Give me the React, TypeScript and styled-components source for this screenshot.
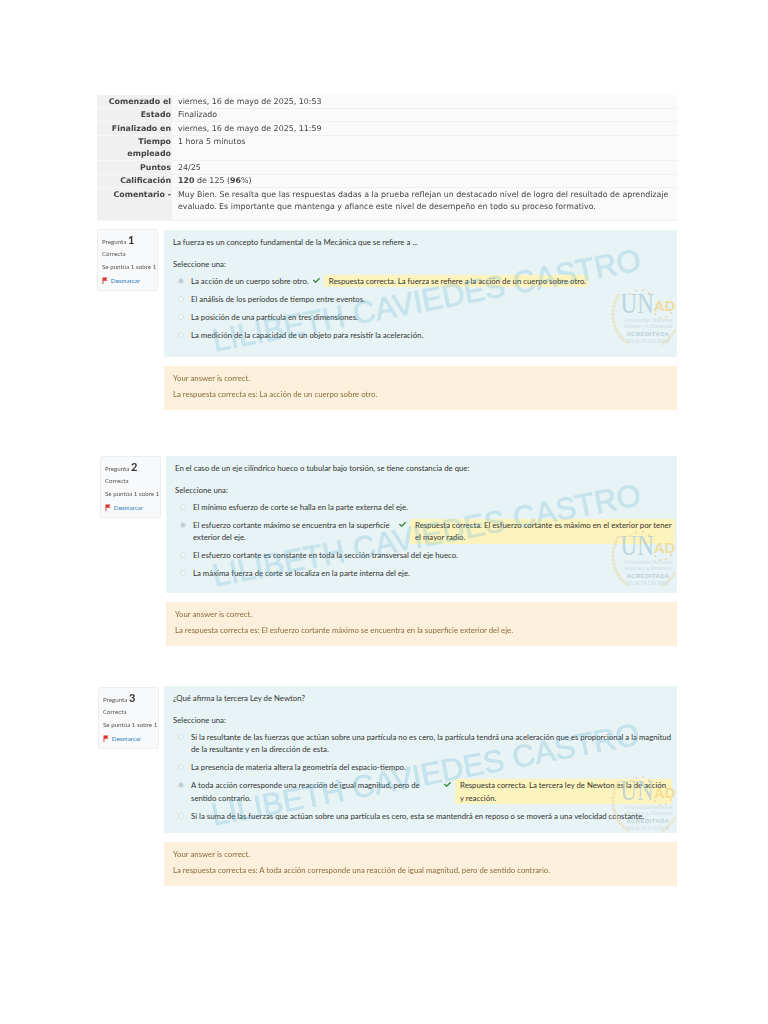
import React from 'react';
import styled, { createGlobalStyle } from 'styled-components';
import { FaCheck } from 'react-icons/fa';

const GlobalStyle = createGlobalStyle`
  html, body {
    margin: 0;
    padding: 0;
    background: #fff;
  }
  body {
    font-family: Lato, "Liberation Sans", sans-serif;
    color: #373a3c;
    height: 1024px;
    overflow: hidden;
  }
`;

type Option = {
  text: string;
  selected?: boolean;
  textWidth?: number;
  feedback?: string;
  feedbackWidth?: number;
  checkGap?: number;
};

type QuestionData = {
  num: number;
  prompt: string;
  indent: number;
  infoTop: number;
  gap: number;
  top: number;
  bottom: number;
  mark: { top: number; left: number };
  logoTop: number;
  options: Option[];
  answer: string;
};

const summary = [
  ['Comenzado el', 'viernes, 16 de mayo de 2025, 10:53'],
  ['Estado', 'Finalizado'],
  ['Finalizado en', 'viernes, 16 de mayo de 2025, 11:59'],
  ['Tiempo empleado', '1 hora 5 minutos'],
  ['Puntos', '24/25'],
];

const questions: QuestionData[] = [
  {
    num: 1,
    prompt: 'La fuerza es un concepto fundamental de la Mecánica que se refiere a ...',
    indent: 0,
    infoTop: -1,
    gap: 6,
    top: 9,
    bottom: 15.5,
    mark: { top: 53, left: 45 },
    logoTop: 58,
    options: [
      {
        text: 'La acción de un cuerpo sobre otro.',
        selected: true,
        feedback: 'Respuesta correcta. La fuerza se refiere a la acción de un cuerpo sobre otro.',
        checkGap: 4,
      },
      { text: 'El análisis de los períodos de tiempo entre eventos.' },
      { text: 'La posición de una partícula en tres dimensiones.' },
      { text: 'La medición de la capacidad de un objeto para resistir la aceleración.' },
    ],
    answer: 'La acción de un cuerpo sobre otro.',
  },
  {
    num: 2,
    prompt: 'En el caso de un eje cilíndrico hueco o tubular bajo torsión, se tiene constancia de que:',
    indent: 3,
    infoTop: 0,
    gap: 5,
    top: 46,
    bottom: 13,
    mark: { top: 62, left: 43 },
    logoTop: 74,
    options: [
      { text: 'El mínimo esfuerzo de corte se halla en la parte externa del eje.' },
      {
        text: 'El esfuerzo cortante máximo se encuentra en la superficie exterior del eje.',
        selected: true,
        textWidth: 202,
        feedback: 'Respuesta correcta. El esfuerzo cortante es máximo en el exterior por tener el mayor radio.',
        feedbackWidth: 265,
        checkGap: 4,
      },
      { text: 'El esfuerzo cortante es constante en toda la sección transversal del eje hueco.' },
      { text: 'La máxima fuerza de corte se localiza en la parte interna del eje.' },
    ],
    answer: 'El esfuerzo cortante máximo se encuentra en la superficie exterior del eje.',
  },
  {
    num: 3,
    prompt: '¿Qué afirma la tercera Ley de Newton?',
    indent: 1,
    infoTop: 1,
    gap: 5,
    top: 40,
    bottom: 11,
    mark: { top: 71, left: 44 },
    logoTop: 89,
    options: [
      {
        text: 'Si la resultante de las fuerzas que actúan sobre una partícula no es cero, la partícula tendrá una aceleración que es proporcional a la magnitud de la resultante y en la dirección de esta.',
      },
      { text: 'La presencia de materia altera la geometría del espacio-tiempo.' },
      {
        text: 'A toda acción corresponde una reacción de igual magnitud, pero de sentido contrario.',
        selected: true,
        textWidth: 232,
        feedback: 'Respuesta correcta. La tercera ley de Newton es la de acción y reacción.',
        feedbackWidth: 217,
        checkGap: 21,
      },
      { text: 'Si la suma de las fuerzas que actúan sobre una partícula es cero, esta se mantendrá en reposo o se moverá a una velocidad constante.' },
    ],
    answer: 'A toda acción corresponde una reacción de igual magnitud, pero de sentido contrario.',
  },
];

const Laurel = () => (
  <LaurelSvg viewBox="0 0 66 60">
    <path d="M8 6C-2 22 0 44 18 56" fill="none" stroke="#e8dfb4" strokeWidth="3" strokeDasharray="3 1" />
    <path d="M64 42C60 49 56 53 50 57" fill="none" stroke="#e8dfb4" strokeWidth="2.5" strokeDasharray="3 1" />
    <g fill="#ecc98e">
      <circle cx="19" cy="6" r="1" />
      <circle cx="25" cy="2.5" r="1" />
      <circle cx="32" cy="2" r="1" />
      <circle cx="38" cy="5" r="1" />
      <circle cx="44" cy="26" r="1" />
      <circle cx="49" cy="30" r="1" />
      <circle cx="55" cy="29" r="1" />
      <circle cx="60" cy="25" r="1" />
    </g>
  </LaurelSvg>
);

const Question = ({ q }: { q: QuestionData }) => (
  <QuestionRow $indent={q.indent} $top={q.top} $gap={q.gap}>
    <Info $top={q.infoTop}>
      <InfoTitle>
        Pregunta <b>{q.num}</b>
      </InfoTitle>
      <InfoLine>Correcta</InfoLine>
      <InfoLine>Se puntúa 1 sobre 1</InfoLine>
      <FlagLine>
        <svg width="6" height="7" viewBox="0 0 6 7">
          <path d="M0.5 0.5H5.5L4.2 2.2L5.5 3.8H1.4V7H0.5Z" fill="#d9322c" />
        </svg>
        Desmarcar
      </FlagLine>
    </Info>
    <Main>
      <Card $bottom={q.bottom}>
        <div>{q.prompt}</div>
        <Select>Seleccione una:</Select>
        <OptionList>
          {q.options.map((o) => (
            <OptionRow key={o.text}>
              <Radio $selected={o.selected} />
              <OptionText $width={o.textWidth}>{o.text}</OptionText>
              {o.feedback && (
                <>
                  <Check $gap={o.checkGap ?? 3}>
                    <FaCheck size={7} />
                  </Check>
                  <Feedback $width={o.feedbackWidth}>{o.feedback}</Feedback>
                </>
              )}
            </OptionRow>
          ))}
        </OptionList>
        <Logo $top={q.logoTop}>
          <Laurel />
          <LogoName>
            <b>UN</b>
            <span>AD</span>
          </LogoName>
          <LogoSmall>Universidad Nacional</LogoSmall>
          <LogoSmall>Abierta y a Distancia</LogoSmall>
          <LogoAccredited>ACREDITADA</LogoAccredited>
          <LogoQuality>EN ALTA CALIDAD</LogoQuality>
        </Logo>
        <Watermark $top={q.mark.top} $left={q.mark.left}>
          LILIBETH CAVIEDES CASTRO
        </Watermark>
      </Card>
      <Outcome>
        <p>Your answer is correct.</p>
        <p>La respuesta correcta es: {q.answer}</p>
      </Outcome>
    </Main>
  </QuestionRow>
);

export default function App() {
  return (
    <Page>
      <GlobalStyle />
      <Summary>
        <tbody>
          {summary.map(([label, value]) => (
            <tr key={label}>
              <th>{label}</th>
              <td>{value}</td>
            </tr>
          ))}
          <tr>
            <th>Calificación</th>
            <td>
              <b>120</b> de 125 (<b>96</b>%)
            </td>
          </tr>
          <tr>
            <th>Comentario -</th>
            <CommentCell>
              Muy Bien. Se resalta que las respuestas dadas a la prueba reflejan un destacado nivel de logro del
              resultado de aprendizaje evaluado. Es importante que mantenga y afiance este nivel de desempeño en todo
              su proceso formativo.
            </CommentCell>
          </tr>
        </tbody>
      </Summary>
      {questions.map((q) => (
        <Question key={q.num} q={q} />
      ))}
    </Page>
  );
}

const Page = styled.main`
  width: 580px;
  margin-left: 97px;
  padding-top: 95px;
  filter: blur(0.45px);
`;

const Summary = styled.table`
  width: 100%;
  border-collapse: collapse;
  table-layout: fixed;
  font-family: 'DejaVu Sans', Verdana, sans-serif;
  font-size: 7.9px;
  line-height: 12px;
  color: #444;

  th {
    width: 75px;
    box-sizing: border-box;
    padding: 0.5px 1px 0 0;
    text-align: right;
    vertical-align: top;
    font-weight: 700;
    background: #f0f0f0;
    border-bottom: 1px solid #f6f6f6;
  }
  td {
    padding: 0.5px 0 0 6px;
    vertical-align: top;
    background: #fafafa;
    border-bottom: 1px solid #f1f1f1;
  }
`;

const CommentCell = styled.td`
  height: 31px;
`;

const QuestionRow = styled.section<{ $indent: number; $top: number; $gap: number }>`
  display: flex;
  align-items: flex-start;
  gap: ${(p) => p.$gap}px;
  margin-top: ${(p) => p.$top}px;
  padding-left: ${(p) => p.$indent}px;
`;

const Info = styled.aside<{ $top: number }>`
  flex: none;
  box-sizing: border-box;
  width: 61px;
  margin-top: ${(p) => p.$top}px;
  padding: 3px 0 4px 4px;
  background: #f8f9fa;
  border: 1px solid #eceeef;
  border-radius: 2px;
  font-size: 6.2px;
  color: #555;
`;

const InfoTitle = styled.div`
  height: 13px;
  line-height: 13px;
  white-space: nowrap;

  b {
    font-size: 11px;
    color: #333;
  }
`;

const InfoLine = styled.div`
  margin-top: 3px;
  line-height: 10px;
  white-space: nowrap;
`;

const FlagLine = styled(InfoLine)`
  display: flex;
  align-items: center;
  gap: 3px;
  margin-top: 4px;
  color: #2f7ab8;
`;

const Main = styled.div`
  flex: 1;
  min-width: 0;
  display: flex;
  flex-direction: column;
  gap: 9px;
`;

const Card = styled.div<{ $bottom: number }>`
  position: relative;
  padding: 6px 2px ${(p) => p.$bottom}px 9px;
  background: #e7f3f5;
  font-size: 7.8px;
  line-height: 12.5px;
  color: #333;
`;

const Select = styled.div`
  margin-top: 10px;
`;

const OptionList = styled.div`
  display: flex;
  flex-direction: column;
  gap: 5.5px;
  margin-top: 4px;
  padding-left: 5px;
`;

const OptionRow = styled.div`
  display: flex;
  align-items: flex-start;
`;

const Radio = styled.span<{ $selected?: boolean }>`
  flex: none;
  box-sizing: border-box;
  width: 6px;
  height: 6px;
  margin: 3px 7px 0 0;
  border-radius: 50%;
  border: 1px solid #dbe3e5;
  background: ${(p) => (p.$selected ? '#c3ccce' : '#f1f6f7')};
`;

const OptionText = styled.span<{ $width?: number }>`
  ${(p) => (p.$width ? `flex: none; width: ${p.$width}px;` : '')}
`;

const Check = styled.span<{ $gap: number }>`
  flex: none;
  margin: 0 4px 0 ${(p) => p.$gap}px;
  color: #3c8a3f;
  line-height: 12px;
`;

const Feedback = styled.span<{ $width?: number }>`
  ${(p) => (p.$width ? `flex: none; width: ${p.$width}px; box-sizing: border-box;` : '')}
  padding: 0 2px 0 5px;
  background: #fdf3bd;
`;

const Watermark = styled.div<{ $top: number; $left: number }>`
  position: absolute;
  top: ${(p) => p.$top}px;
  left: ${(p) => p.$left}px;
  white-space: nowrap;
  font-family: 'Liberation Sans', Arial, sans-serif;
  font-size: 31px;
  line-height: 36px;
  -webkit-text-stroke: 0.5px rgba(96, 180, 214, 0.24);
  color: rgba(96, 180, 214, 0.24);
  transform: rotate(-10.8deg);
  pointer-events: none;
`;

const Logo = styled.div<{ $top: number }>`
  position: absolute;
  top: ${(p) => p.$top}px;
  right: 0;
  width: 66px;
  height: 60px;
  box-sizing: border-box;
  padding: 3px 0 0 8px;
  text-align: center;
  opacity: 0.7;
`;

const LaurelSvg = styled.svg`
  position: absolute;
  top: 0;
  left: 0;
  width: 66px;
  height: 60px;
`;

const LogoName = styled.div`
  position: relative;
  height: 26px;
  font-family: 'Liberation Serif', serif;
  line-height: 26px;
  white-space: nowrap;

  b {
    display: inline-block;
    font-size: 23px;
    font-weight: 400;
    color: #a9c9d6;
    transform: scaleY(1.3);
  }
  span {
    font-family: 'Liberation Sans', sans-serif;
    font-weight: 700;
    font-size: 15px;
    color: #f3d47f;
  }
`;

const LogoSmall = styled.div`
  position: relative;
  font-family: 'Liberation Sans', sans-serif;
  font-size: 5.2px;
  line-height: 6px;
  white-space: nowrap;
  color: #c9d6d6;
`;

const LogoAccredited = styled.div`
  position: relative;
  margin-top: 2px;
  font-family: 'Liberation Sans', sans-serif;
  font-size: 6px;
  line-height: 7px;
  font-weight: 700;
  letter-spacing: 0.4px;
  color: #a9bfcc;
`;

const LogoQuality = styled.div`
  position: relative;
  font-family: 'Liberation Sans', sans-serif;
  font-size: 5px;
  line-height: 6px;
  white-space: nowrap;
  color: #c3d3d8;
`;

const Outcome = styled.div`
  box-sizing: border-box;
  height: 44px;
  padding: 6px 9px;
  background: #fcefdc;
  font-size: 7.8px;
  line-height: 12.5px;
  color: #8a6d3b;

  p {
    margin: 0 0 3.5px;
  }
`;
